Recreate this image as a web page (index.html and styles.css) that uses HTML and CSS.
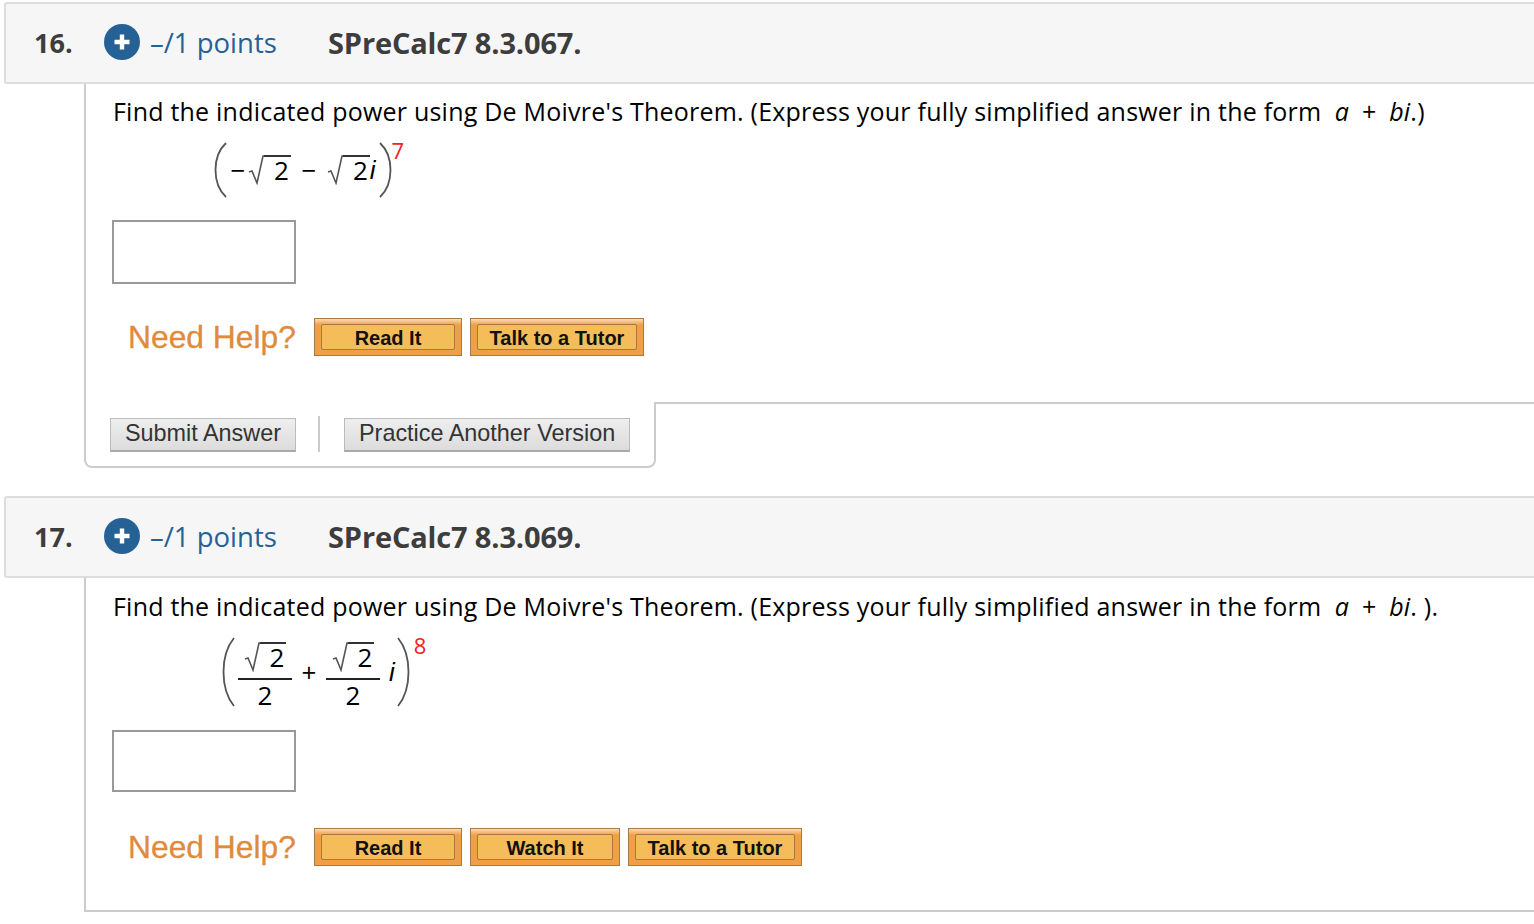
FILE: index.html
```html
<!DOCTYPE html>
<html lang="en">
<head>
    <meta charset="UTF-8">
    <meta name="viewport" content="width=device-width, initial-scale=1.0">
    <title>Homework questions</title>
    <link rel="stylesheet" href="styles.css">
</head>
<body>
    <!-- question 16 -->
    <div class="question first">
        <div class="q-head">
            <span class="q-num">16.</span>
            <svg class="q-plus" viewBox="0 0 36 36"><circle cx="18" cy="18" r="18" fill="#266196"/><path d="M18 10.5v15M10.5 18h15" stroke="#fff" stroke-width="4.4"/></svg>
            <span class="q-points">–/1 points</span>
            <span class="q-title">SPreCalc7 8.3.067.</span>
        </div>
        <div class="q-body body-16">
            <p class="prompt">Find the indicated power using De Moivre's Theorem. (Express your fully simplified answer in the form &nbsp;<span class="tail"><i>a</i> + <i>bi</i></span>.)</p>
            <div class="math math-16">
                <svg class="paren" viewBox="0 0 14 56"><path d="M12 1C-2 14 -2 42 12 55" fill="none" stroke="#555" stroke-width="1.8"/></svg>
                <span class="op">−</span>
                <span class="root"><svg class="check" viewBox="0 0 16 30"><path d="M1 17l3-1 5 12 6-27h2" fill="none" stroke="#555" stroke-width="1.6"/></svg><span class="radicand">2</span></span>
                <span class="op op-wide">−</span>
                <span class="root"><svg class="check" viewBox="0 0 16 30"><path d="M1 17l3-1 5 12 6-27h2" fill="none" stroke="#555" stroke-width="1.6"/></svg><span class="radicand">2</span></span>
                <i class="imag">i</i>
                <svg class="paren" viewBox="0 0 14 56"><path d="M2 1C16 14 16 42 2 55" fill="none" stroke="#555" stroke-width="1.8"/></svg>
                <sup class="power">7</sup>
            </div>
            <div class="answer"></div>
            <div class="help">
                <span class="help-label">Need Help?</span>
                <span class="help-btn w-read"><span>Read It</span></span>
                <span class="help-btn w-talk"><span>Talk to a Tutor</span></span>
            </div>
        </div>
        <div class="q-foot">
            <div class="actions">
                <span class="gray-btn">Submit Answer</span>
                <span class="divider"></span>
                <span class="gray-btn">Practice Another Version</span>
            </div>
            <div class="filler"></div>
        </div>
    </div>

    <!-- question 17 -->
    <div class="question">
        <div class="q-head">
            <span class="q-num">17.</span>
            <svg class="q-plus" viewBox="0 0 36 36"><circle cx="18" cy="18" r="18" fill="#266196"/><path d="M18 10.5v15M10.5 18h15" stroke="#fff" stroke-width="4.4"/></svg>
            <span class="q-points">–/1 points</span>
            <span class="q-title">SPreCalc7 8.3.069.</span>
        </div>
        <div class="q-body body-17">
            <p class="prompt">Find the indicated power using De Moivre's Theorem. (Express your fully simplified answer in the form &nbsp;<span class="tail"><i>a</i> + <i>bi</i></span>. ).</p>
            <div class="math math-17">
                <svg class="paren tall" viewBox="0 0 14 70"><path d="M12 1C-2 18 -2 52 12 69" fill="none" stroke="#555" stroke-width="1.8"/></svg>
                <span class="frac">
                    <span class="root"><svg class="check" viewBox="0 0 16 30"><path d="M1 17l3-1 5 12 6-27h2" fill="none" stroke="#555" stroke-width="1.6"/></svg><span class="radicand">2</span></span>
                    <span class="denom">2</span>
                </span>
                <span class="op op-plus">+</span>
                <span class="frac">
                    <span class="root"><svg class="check" viewBox="0 0 16 30"><path d="M1 17l3-1 5 12 6-27h2" fill="none" stroke="#555" stroke-width="1.6"/></svg><span class="radicand">2</span></span>
                    <span class="denom">2</span>
                </span>
                <i class="imag imag-17">i</i>
                <svg class="paren tall" viewBox="0 0 14 70"><path d="M2 1C16 18 16 52 2 69" fill="none" stroke="#555" stroke-width="1.8"/></svg>
                <sup class="power">8</sup>
            </div>
            <div class="answer answer-17"></div>
            <div class="help">
                <span class="help-label">Need Help?</span>
                <span class="help-btn w-read"><span>Read It</span></span>
                <span class="help-btn w-watch"><span>Watch It</span></span>
                <span class="help-btn w-talk"><span>Talk to a Tutor</span></span>
            </div>
        </div>
    </div>
</body>
</html>
```

FILE: styles.css
```css
body {
    margin: 0;
    padding: 2px 0 0 4px;
    background-color: #fff;
    font-family: "Open Sans", sans-serif;
    color: #000;
    overflow: hidden;
}

.question.first {
    margin-bottom: 28px;
}

.q-head {
    box-sizing: border-box;
    height: 82px;
    margin-right: -4px;
    padding-left: 28px;
    padding-bottom: 2px;
    display: flex;
    align-items: center;
    background-color: #f6f6f6;
    border: 2px solid #ddd;
    border-right: none;
    border-radius: 3px 0 0 3px;
}

.q-num {
    width: 70px;
    font-size: 27px;
    font-weight: 700;
    color: #3d3d3d;
}

.q-plus {
    width: 36px;
    height: 36px;
    margin-right: 10px;
}

.q-points {
    width: 178px;
    font-size: 27.5px;
    font-weight: 500;
    color: #266196;
}

.q-title {
    font-size: 29px;
    font-weight: 700;
    color: #3d3d3d;
    letter-spacing: -0.15px;
}

.q-body {
    box-sizing: border-box;
    margin-left: 80px;
    padding-left: 26px;
    border-left: 2px solid #ccc;
}

.body-16 {
    height: 318px;
}

.body-17 {
    height: 334px;
    border-bottom: 2px solid #ccc;
}

.prompt {
    margin: 0;
    padding: 10px 0 0 1px;
    font-size: 25px;
    line-height: 36px;
    letter-spacing: 0.22px;
    white-space: nowrap;
}

.body-16 .prompt {
    padding-top: 9px;
}

.tail {
    word-spacing: 6px;
}

.math {
    display: flex;
    align-items: center;
    font-size: 26px;
}

.math-16 {
    height: 56px;
    margin-top: 13px;
    padding-left: 102px;
}

.math-17 {
    height: 72px;
    margin-top: 12px;
    padding-left: 110px;
}

.paren {
    width: 14px;
    height: 56px;
}

.paren.tall {
    height: 70px;
}

.op {
    width: 20px;
    text-align: center;
}

.op-wide {
    width: 36px;
}

.op-plus {
    width: 34px;
}

.root {
    display: inline-flex;
    align-items: flex-end;
}

.check {
    width: 16px;
    height: 30px;
}

.radicand {
    padding: 0 2px 2px 10px;
    line-height: 26px;
    border-top: 2px solid #333;
}

.imag {
    font-family: "Liberation Sans", sans-serif;
}

.math-16 .imag {
    margin-right: 2px;
}

.imag-17 {
    margin-left: 9px;
    margin-right: 1px;
}

.power {
    align-self: flex-start;
    margin: -4px 0 0 0;
    font-size: 22px;
    line-height: 24px;
    color: #e22;
}

.math-17 .power {
    margin: -3px 0 0 4px;
}

.frac {
    display: inline-flex;
    flex-direction: column;
    align-items: center;
    width: 54px;
    margin-top: 8px;
}

.math-17 .paren + .frac {
    margin-left: 2px;
}

.frac .root {
    padding-bottom: 6px;
    border-bottom: 2px solid #222;
    justify-content: center;
    width: 100%;
}

.denom {
    line-height: 30px;
}

.answer {
    box-sizing: border-box;
    width: 184px;
    height: 64px;
    margin-top: 22px;
    border: 2px solid #999;
}

.answer-17 {
    height: 62px;
    margin-top: 22px;
}

.help {
    display: flex;
    align-items: center;
    gap: 8px;
    height: 38px;
    margin-top: 34px;
    padding-left: 16px;
}

.answer-17 + .help {
    margin-top: 36px;
}

.help-label {
    width: 178px;
    font-family: "Liberation Sans", sans-serif;
    font-size: 31.8px;
    color: #e08a3c;
    -webkit-text-stroke: 0.3px #e08a3c;
    white-space: nowrap;
}

.help-btn {
    box-sizing: border-box;
    height: 38px;
    padding: 5px 6px;
    background: linear-gradient(#f9dcb4 0, #ef9f45 6px);
    border: 1px solid #a87a44;
}

.help-btn span {
    box-sizing: border-box;
    display: block;
    height: 26px;
    font-family: "Liberation Sans", sans-serif;
    font-size: 20px;
    font-weight: bold;
    line-height: 26px;
    text-align: center;
    color: #111;
    background-color: #f5bd59;
    border: 1px solid #a6793f;
    border-radius: 2px;
}

.w-read {
    width: 148px;
}

.w-watch {
    width: 150px;
}

.w-talk {
    width: 174px;
}

.q-foot {
    display: flex;
    margin-left: 80px;
    margin-right: -4px;
}

.actions {
    box-sizing: border-box;
    display: flex;
    align-items: flex-start;
    width: 572px;
    height: 66px;
    padding: 16px 0 0 24px;
    border: 2px solid #ccc;
    border-top: none;
    border-radius: 0 0 8px 8px;
}

.gray-btn {
    box-sizing: border-box;
    height: 34px;
    padding: 0 14px;
    font-family: "Liberation Sans", sans-serif;
    font-size: 23.4px;
    line-height: 28px;
    color: #333;
    background: linear-gradient(#eee, #dcdcdc);
    border: 1px solid #bbb;
    border-bottom: 2px solid #aaa;
    white-space: nowrap;
}

.divider {
    width: 2px;
    height: 36px;
    margin: -2px 24px 0 22px;
    background-color: #ccc;
}

.filler {
    flex: 1;
    border-top: 2px solid #ccc;
}
```
